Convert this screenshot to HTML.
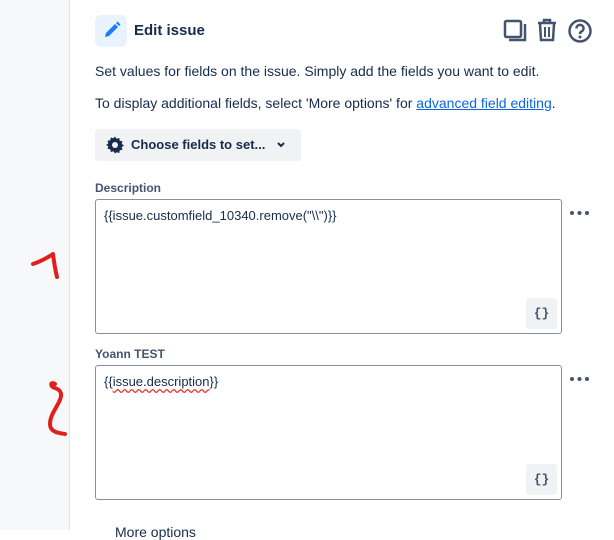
<!DOCTYPE html>
<html><head><meta charset="utf-8"><style>
*{box-sizing:border-box;margin:0;padding:0}
body{width:614px;height:530px;overflow:hidden;background:#fff;font-family:"Liberation Sans",sans-serif;color:#172b4d;position:relative}
.side{position:absolute;left:0;top:0;width:70px;height:530px;background:#f7f8f9;border-right:1px solid #e4e6ea}
.abs{position:absolute}
.ta{position:absolute;left:95px;width:467px;height:135px;border:1px solid #8590a2;border-radius:3px;background:#fff}
.ta span{position:absolute;left:8px;top:8px;font-size:13px;color:#172b4d}
.br{position:absolute;right:4px;bottom:4px;width:31px;height:31px;background:#f1f2f4;border-radius:3px;font-family:"Liberation Mono",monospace;font-size:13px;font-weight:bold;color:#44546f;text-align:center;line-height:31px}
.lbl{position:absolute;left:95px;font-size:12px;font-weight:bold;color:#44546f}
p{position:absolute;left:95px;font-size:14px;color:#172b4d}
</style></head><body>
<div class="side"></div>
<div class="abs" style="left:95px;top:15px;width:32px;height:32px;background:#e9f2ff;border-radius:6px">
<svg width="32" height="32" viewBox="0 0 32 32"><path d="M10 22l1-4 9-9 3 3-9 9z" fill="#1d7afc"/><path d="M21 8l1.5-1.5 3 3L24 11z" fill="#1d7afc"/></svg></div>
<div class="abs" style="left:134px;top:22px;font-size:15px;font-weight:bold;color:#172b4d">Edit issue</div>
<svg class="abs" style="left:502px;top:18px" width="26" height="26" viewBox="0 0 26 26"><rect x="3" y="3" width="16" height="16" rx="1.5" fill="none" stroke="#44546f" stroke-width="2.5"/><path d="M23 6v16H7" fill="none" stroke="#44546f" stroke-width="2.5"/></svg>
<svg class="abs" style="left:535px;top:17px" width="24" height="26" viewBox="0 0 24 26"><path d="M3 6h18M9 6V3h6v3" stroke="#44546f" stroke-width="2.5" fill="none"/><path d="M5 7l1 16h12l1-16" fill="none" stroke="#44546f" stroke-width="2.5"/><path d="M10 10v10M14 10v10" stroke="#44546f" stroke-width="2"/></svg>
<svg class="abs" style="left:567px;top:18px" width="26" height="26" viewBox="0 0 26 26"><circle cx="13" cy="13" r="10.5" fill="none" stroke="#44546f" stroke-width="2.5"/><path d="M9.5 10.5a3.5 3.5 0 1 1 5 3c-1 .6-1.5 1.2-1.5 2.5" fill="none" stroke="#44546f" stroke-width="2.5"/><circle cx="13" cy="19" r="1.5" fill="#44546f"/></svg>
<p style="top:63px">Set values for fields on the issue. Simply add the fields you want to edit.</p>
<p style="top:95px">To display additional fields, select 'More options' for <span style="color:#0c66e4;text-decoration:underline">advanced field editing</span>.</p>
<div class="abs" style="left:95px;top:129px;width:206px;height:32px;background:#f1f2f4;border-radius:3px">
<svg class="abs" style="left:10px;top:6px" width="20" height="20" viewBox="0 0 20 20"><path d="M10 1.5l1.6 2.3 2.7-.8.4 2.8 2.8.4-.8 2.7 2.3 1.6-2.3 1.6.8 2.7-2.8.4-.4 2.8-2.7-.8L10 18.5l-1.6-2.3-2.7.8-.4-2.8-2.8-.4.8-2.7L1 10l2.3-1.6-.8-2.7 2.8-.4.4-2.8 2.7.8z" fill="#172b4d"/><circle cx="10" cy="10" r="3" fill="#f1f2f4"/></svg>
<span class="abs" style="left:36px;top:8px;font-size:13px;font-weight:bold;color:#172b4d">Choose fields to set...</span>
<svg class="abs" style="left:181px;top:12px" width="10" height="8" viewBox="0 0 10 8"><path d="M2 2l3 3 3-3" stroke="#172b4d" stroke-width="2" fill="none"/></svg></div>
<div class="lbl" style="top:181px">Description</div>
<div class="ta" style="top:199px"><span>{{issue.customfield_10340.remove("\\")}}</span><div class="br">{}</div></div>
<svg class="abs" style="left:569px;top:210px" width="22" height="6"><circle cx="3" cy="3" r="2" fill="#44546f"/><circle cx="10.5" cy="3" r="2" fill="#44546f"/><circle cx="18" cy="3" r="2" fill="#44546f"/></svg>
<div class="lbl" style="top:347px">Yoann TEST</div>
<div class="ta" style="top:365px"><span>{{<u style="text-decoration:underline wavy #e33;text-underline-offset:2px">issue.description</u>}}</span><div class="br">{}</div></div>
<svg class="abs" style="left:569px;top:376px" width="22" height="6"><circle cx="3" cy="3" r="2" fill="#44546f"/><circle cx="10.5" cy="3" r="2" fill="#44546f"/><circle cx="18" cy="3" r="2" fill="#44546f"/></svg>
<div class="abs" style="left:115px;top:524px;font-size:14px;color:#172b4d">More options</div>
<svg class="abs" style="left:0;top:0" width="80" height="530"><path d="M33 264c6-2 11-4 20-10 1 8 2 15 4 23" stroke="#e0201c" stroke-width="4" fill="none" stroke-linecap="round" stroke-linejoin="round"/><path d="M55 384c-5-3-5 3 0 4 6 2 8 6 4 14-4 8-9 14-9 22 0 8 8 9 15 10" stroke="#e0201c" stroke-width="4" fill="none" stroke-linecap="round"/></svg>
</body></html>
